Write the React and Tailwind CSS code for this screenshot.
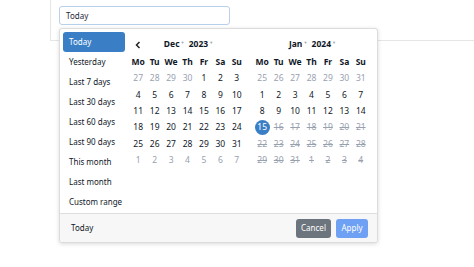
import React from 'react';

const ranges = ['Today', 'Yesterday', 'Last 7 days', 'Last 30 days', 'Last 60 days', 'Last 90 days', 'This month', 'Last month', 'Custom range'];
const weekdays = ['Mo', 'Tu', 'We', 'Th', 'Fr', 'Sa', 'Su'];

// each cell: [label, kind] kind: 'off' | 'on' | 'dis' | 'sel'
const dec = [
  [27, 'off'], [28, 'off'], [29, 'off'], [30, 'off'], [1, 'on'], [2, 'on'], [3, 'on'],
  ...[4, 5, 6, 7, 8, 9, 10, 11, 12, 13, 14, 15, 16, 17, 18, 19, 20, 21, 22, 23, 24, 25, 26, 27, 28, 29, 30, 31].map(d => [d, 'on']),
  ...[1, 2, 3, 4, 5, 6, 7].map(d => [d, 'off']),
];
const jan = [
  ...[25, 26, 27, 28, 29, 30, 31].map(d => [d, 'off']),
  ...[1, 2, 3, 4, 5, 6, 7, 8, 9, 10, 11, 12, 13, 14].map(d => [d, 'on']),
  [15, 'sel'],
  ...[16, 17, 18, 19, 20, 21, 22, 23, 24, 25, 26, 27, 28, 29, 30, 31, 1, 2, 3, 4].map(d => [d, 'dis']),
];

function Caret() {
  return <span className="text-[4px] text-gray-400 align-top ml-[1px] relative top-[2px]">▼</span>;
}

function Calendar({ month, year, days, prev }) {
  return (
    <div className="w-[115px]">
      <div className="h-[17px] flex items-center relative">
        {prev && (
          <svg className="absolute left-[5px] top-[5px]" width="6" height="8" viewBox="0 0 6 8">
            <path d="M4.5 1 L1.5 4 L4.5 7" fill="none" stroke="#222" strokeWidth="1.5" />
          </svg>
        )}
        <div className="w-full text-center font-bold text-[8.5px] text-gray-900 pl-[2px]">
          {month}<Caret /> <span className="ml-[2px]">{year}</span><Caret />
        </div>
      </div>
      <div className="grid grid-cols-7 mt-[1px]">
        {weekdays.map(w => (
          <div key={w} className="h-[16.4px] flex items-center justify-center font-bold text-[8.5px] text-gray-900">{w}</div>
        ))}
        {days.map(([d, k], i) => (
          <div key={i} className="h-[16.4px] flex items-center justify-center text-[8.5px]">
            {k === 'sel' ? (
              <span className="w-[15px] h-[15px] rounded-full bg-[#3a7fc6] text-white flex items-center justify-center">{d}</span>
            ) : (
              <span className={k === 'on' ? 'text-gray-900' : k === 'off' ? 'text-gray-400' : 'text-gray-400 line-through'}>{d}</span>
            )}
          </div>
        ))}
      </div>
    </div>
  );
}

export default function App() {
  return (
    <div className="relative w-[474px] h-[267px] bg-white overflow-hidden" style={{ fontFamily: '"Noto Sans", sans-serif' }}>
      <div className="ml-[50px] h-[41px] border-l border-b border-[#e6e6e6] pl-[8px] pt-[6px]">
        <div className="w-[171px] h-[19px] border border-[#b8d0ec] rounded-[3px] flex items-center px-[6px] text-[8px] text-gray-800">Today</div>
      </div>

      <div className="absolute left-[59px] top-[28px] w-[319px] h-[215px] bg-white border border-[#dcdcdc] rounded-[3px] shadow-[0_1px_4px_rgba(0,0,0,0.15)] flex flex-col">
        <div className="flex flex-1">
          <div className="w-[70px] pl-[3px] pt-[3px] flex flex-col">
            {ranges.map((r, i) => (
              <div key={r} className={i === 0
                ? 'w-[62px] h-[20px] rounded-[3px] bg-[#3a7fc6] text-white text-[8px] flex items-center pl-[6px]'
                : 'h-[20px] text-[8px] text-gray-900 flex items-center pl-[6px]'}>
                {r}
              </div>
            ))}
          </div>
          <div className="flex gap-[9px] pt-[7px]">
            <Calendar month="Dec" year="2023" days={dec} prev />
            <Calendar month="Jan" year="2024" days={jan} />
          </div>
        </div>
        <div className="h-[29px] bg-[#f7f7f7] border-t border-[#dedede] flex items-center justify-between pl-[11px] pr-[9px] rounded-b-[3px]">
          <span className="text-[8px] text-gray-900">Today</span>
          <div className="flex gap-[5px]">
            <button className="w-[35px] h-[19px] rounded-[3px] bg-[#6c757d] text-white text-[8px]">Cancel</button>
            <button className="w-[32px] h-[19px] rounded-[3px] bg-[#6ea0f4] text-white text-[8px]">Apply</button>
          </div>
        </div>
      </div>
    </div>
  );
}
